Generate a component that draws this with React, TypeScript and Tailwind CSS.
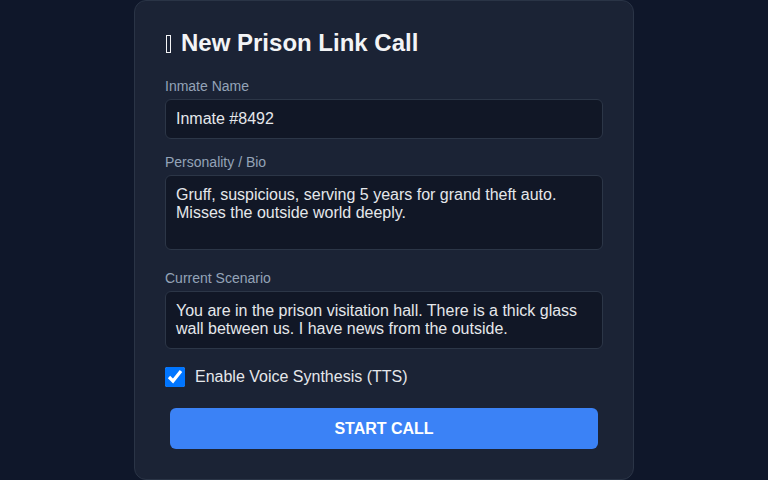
import { useState } from 'react'

const FIELDS = [
  { key: 'name', label: 'Inmate Name', value: 'Inmate #8492', kind: 'input' },
  {
    key: 'bio',
    label: 'Personality / Bio',
    value: 'Gruff, suspicious, serving 5 years for grand theft auto. Misses the outside world deeply.',
    kind: 'bio',
  },
  {
    key: 'scenario',
    label: 'Current Scenario',
    value: 'You are in the prison visitation hall. There is a thick glass wall between us. I have news from the outside.',
    kind: 'scenario',
  },
]

export default function App() {
  const [form, setForm] = useState<Record<string, string>>(
    Object.fromEntries(FIELDS.map((f) => [f.key, f.value]))
  )
  const [tts, setTts] = useState(true)

  const boxClass =
    'block w-full bg-[#111726] border border-[#2c3647] rounded-md px-[10px] py-[10px] text-[16px] leading-[18px] text-[#e5e7eb] focus:outline-none resize-none'

  return (
    <div className="min-h-screen bg-[#0f172a] font-['Liberation_Sans',Arial,sans-serif]">
      <div className="w-[500px] h-[480px] mx-auto bg-[#1b2335] border border-[#2a3446] rounded-xl px-[30px] pt-[28px]">
        <h2 className="flex items-center text-[24px] leading-[28px] font-bold text-[#f3f4f6] mb-[21px]">
          {/* missing-glyph box, as the emoji renders in the reference */}
          <span className="inline-block w-[5px] h-[18px] border border-[#f3f4f6] ml-[1px] mr-[10px] mt-[1px]" />
          New Prison Link Call
        </h2>

        <form className="flex flex-col" onSubmit={(e) => e.preventDefault()}>
          {FIELDS.map((field, i) => (
            <div key={field.key} className={i === 0 ? 'mb-[15px]' : i === 1 ? 'mb-[20px]' : 'mb-[18px]'}>
              <label className="block text-[14px] leading-[16px] text-[#94a3b8] mb-[5px]">{field.label}</label>
              {field.kind === 'input' ? (
                <input
                  type="text"
                  value={form[field.key]}
                  onChange={(e) => setForm((f) => ({ ...f, [field.key]: e.target.value }))}
                  className={boxClass + ' h-[40px]'}
                />
              ) : (
                <textarea
                  value={form[field.key]}
                  onChange={(e) => setForm((f) => ({ ...f, [field.key]: e.target.value }))}
                  className={boxClass + (field.kind === 'bio' ? ' h-[75px]' : ' h-[58px]')}
                />
              )}
            </div>
          ))}

          <label className="flex items-center gap-[10px] h-[20px] text-[16px] text-[#e5e7eb] mb-[21px]">
            <input
              type="checkbox"
              checked={tts}
              onChange={(e) => setTts(e.target.checked)}
              className="w-5 h-5 m-0"
            />
            Enable Voice Synthesis (TTS)
          </label>

          <button
            type="submit"
            className="mx-[5px] h-[41px] bg-[#3b82f6] hover:bg-[#2563eb] text-white text-[16px] font-bold rounded-md"
          >
            START CALL
          </button>
        </form>
      </div>
    </div>
  )
}
